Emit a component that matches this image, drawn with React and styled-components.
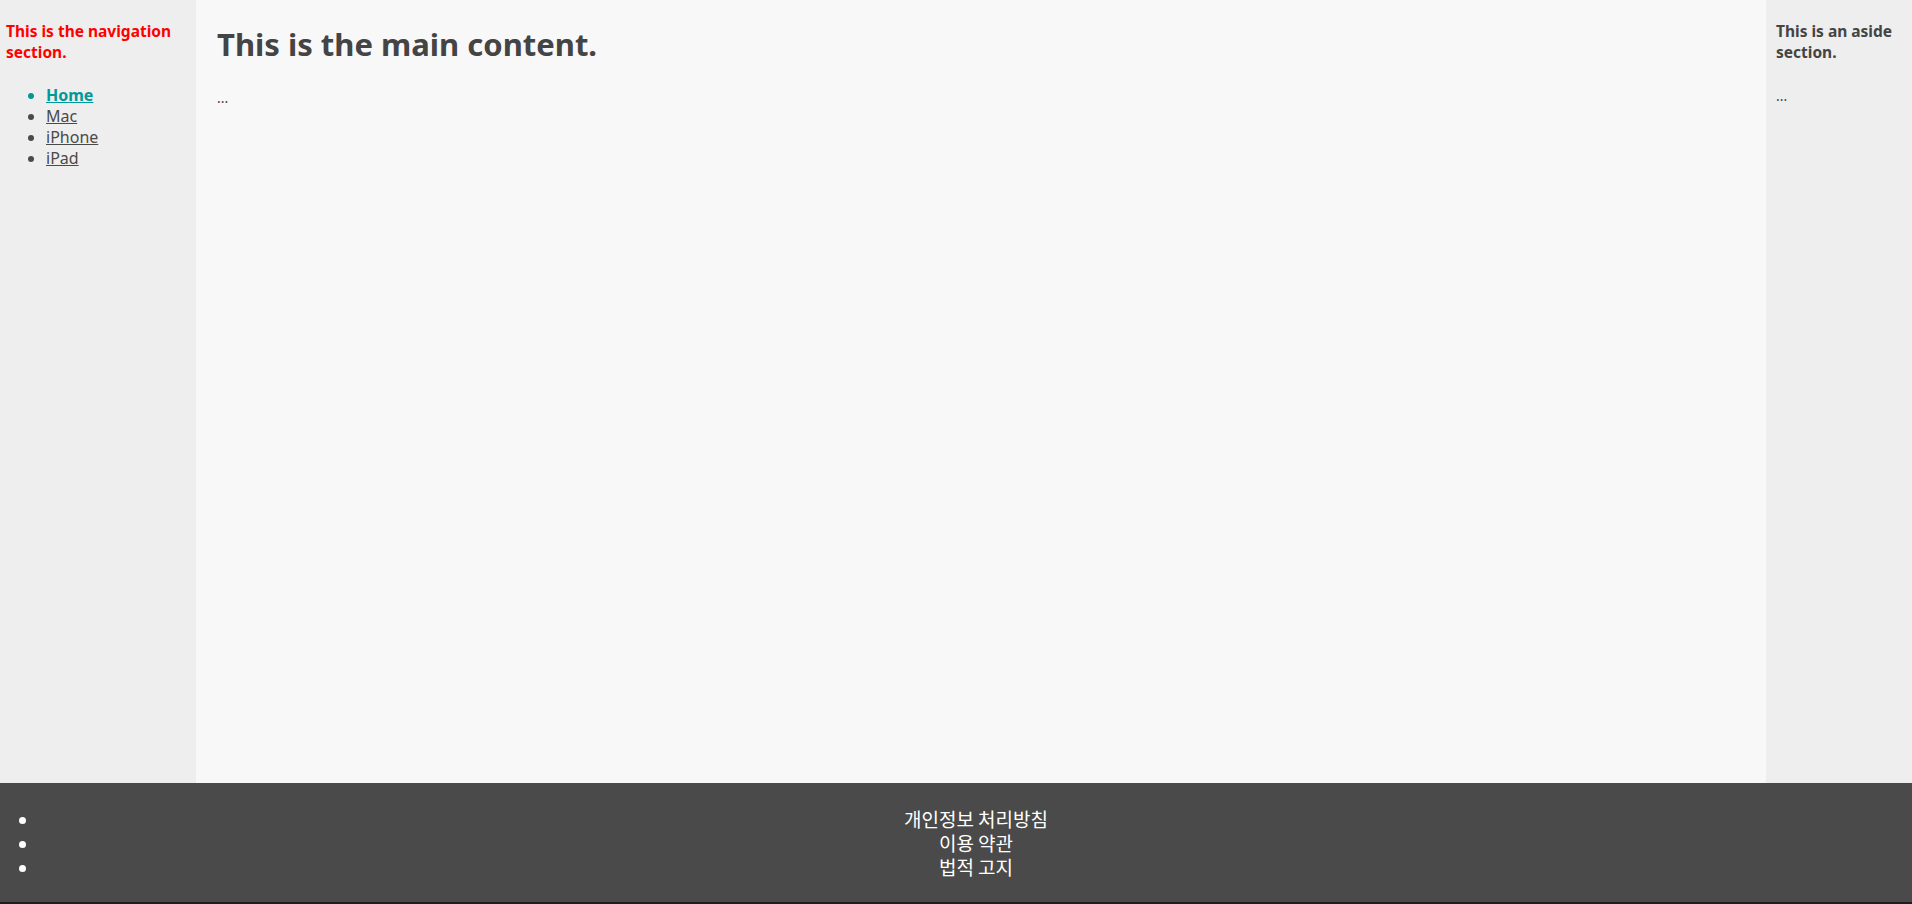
import React from "react";
import styled, { createGlobalStyle } from "styled-components";

const GlobalStyle = createGlobalStyle`
  html, body {
    margin: 0;
    padding: 0;
    height: 100%;
    background: #1e1e1e;
  }
  body {
    font-family: "Noto Sans", "Noto Sans CJK KR", sans-serif;
    font-size: 16px;
    color: #444;
  }
  #root {
    height: 100%;
  }
`;

const Page = styled.div`
  height: 902px;
  display: flex;
  flex-direction: column;
`;

const Body = styled.div`
  flex: 1;
  display: flex;
`;

const Nav = styled.nav`
  width: 196px;
  flex-shrink: 0;
  box-sizing: border-box;
  padding: 0 6px;
  background: #eeeeee;
`;

const NavTitle = styled.h3`
  margin: 21px 0 0;
  font-size: 15.5px;
  line-height: 21px;
  font-weight: 700;
  color: #ff0000;
`;

const NavList = styled.ul`
  margin: 22px 0 0;
  padding-left: 40px;
  font-size: 16px;
  line-height: 21px;
`;

const NavItem = styled.li`
  color: ${({ $active }) => ($active ? "#009999" : "#4a4a4a")};
`;

const NavLink = styled.a`
  color: ${({ $active }) => ($active ? "#009999" : "#4a4a4a")};
  font-weight: ${({ $active }) => ($active ? 700 : 400)};
  text-decoration: underline;
  cursor: pointer;
`;

const Main = styled.main`
  flex: 1;
  box-sizing: border-box;
  padding: 0 21px;
  background: #f8f8f8;
`;

const Heading = styled.h1`
  margin: 24px 0 0;
  font-size: 31px;
  line-height: 40px;
  font-weight: 700;
  color: #444;
`;

const Text = styled.p`
  margin: ${({ $top }) => $top || "24px"} 0 0;
  font-size: 14px;
  line-height: 20px;
`;

const Aside = styled.aside`
  width: 146px;
  flex-shrink: 0;
  box-sizing: border-box;
  padding: 0 10px;
  background: #eeeeee;
`;

const AsideTitle = styled.h3`
  margin: 21px 0 0;
  font-size: 15.5px;
  line-height: 21px;
  font-weight: 700;
  color: #444;
`;

const Footer = styled.footer`
  height: 119px;
  box-sizing: border-box;
  padding: 24px 0 0;
  background: #4a4a4a;
  color: #ffffff;
`;

const FooterList = styled.ul`
  margin: 0;
  padding-left: 40px;
  font-family: "Noto Sans CJK KR", "Noto Sans", sans-serif;
  font-size: 19px;
  line-height: 24px;
  text-align: center;
`;

const links = [
  { label: "Home", active: true },
  { label: "Mac" },
  { label: "iPhone" },
  { label: "iPad" },
];

const footerLinks = ["개인정보 처리방침", "이용 약관", "법적 고지"];

export default function App() {
  return (
    <>
      <GlobalStyle />
      <Page>
        <Body>
          <Nav>
            <NavTitle>This is the navigation section.</NavTitle>
            <NavList>
              {links.map((l) => (
                <NavItem key={l.label} $active={l.active}>
                  <NavLink $active={l.active}>{l.label}</NavLink>
                </NavItem>
              ))}
            </NavList>
          </Nav>
          <Main>
            <Heading>This is the main content.</Heading>
            <Text $top="24px">...</Text>
          </Main>
          <Aside>
            <AsideTitle>This is an aside section.</AsideTitle>
            <Text $top="23px">...</Text>
          </Aside>
        </Body>
        <Footer>
          <FooterList>
            {footerLinks.map((f) => (
              <li key={f}>{f}</li>
            ))}
          </FooterList>
        </Footer>
      </Page>
    </>
  );
}
